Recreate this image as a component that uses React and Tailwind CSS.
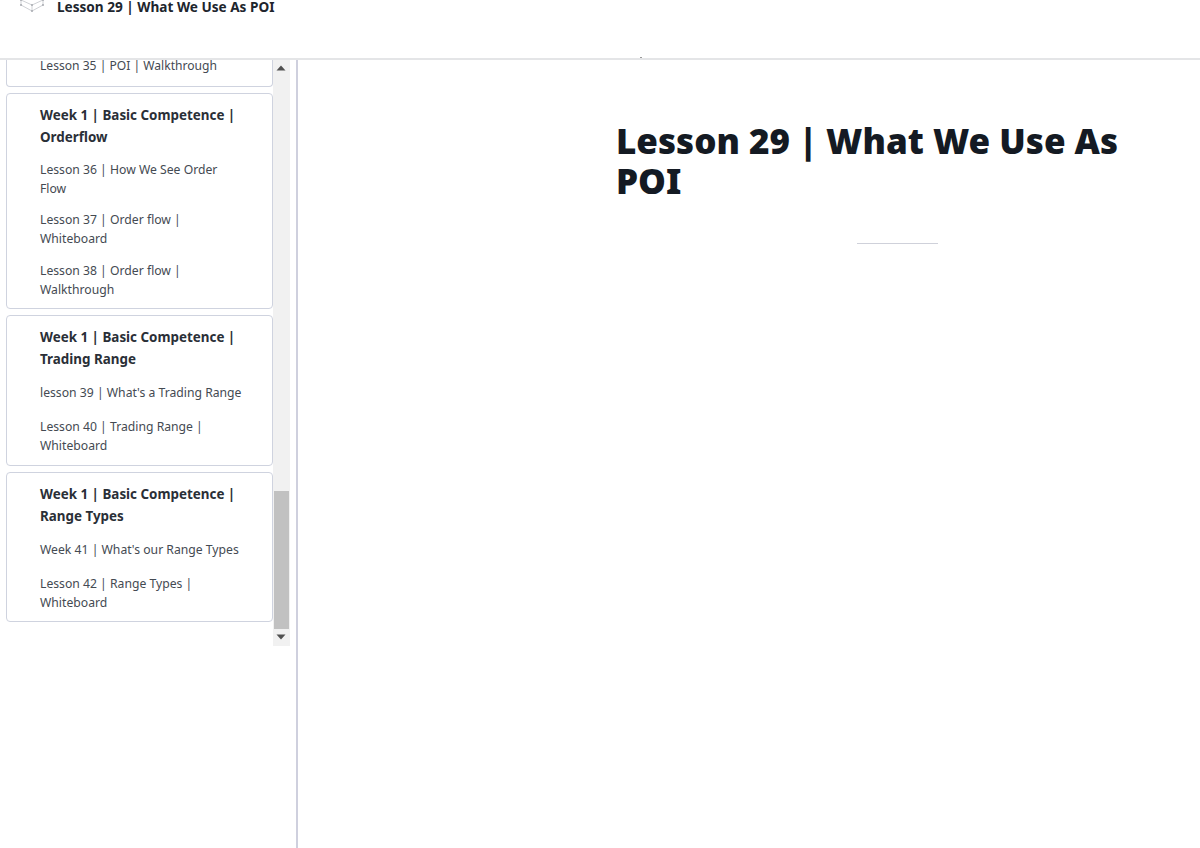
const font = { fontFamily: '"Noto Sans", "Open Sans", sans-serif' };

const groups = [
  { lessons: [["Lesson 35 | POI | Walkthrough"]], clipped: true },
  {
    title: ["Week 1 | Basic Competence |", "Orderflow"],
    lessons: [["Lesson 36 | How We See Order", "Flow"], ["Lesson 37 | Order flow |", "Whiteboard"], ["Lesson 38 | Order flow |", "Walkthrough"]],
    h: "h-[216px]",
  },
  {
    title: ["Week 1 | Basic Competence |", "Trading Range"],
    lessons: [["lesson 39 | What's a Trading Range"], ["Lesson 40 | Trading Range |", "Whiteboard"]],
    h: "h-[151px]",
  },
  {
    title: ["Week 1 | Basic Competence |", "Range Types"],
    lessons: [["Week 41 | What's our Range Types"], ["Lesson 42 | Range Types |", "Whiteboard"]],
    h: "h-[150px]",
  },
];

function Card({ g }) {
  if (g.clipped) {
    return (
      <div className="h-[27px] shrink-0 rounded-b border border-t-0 border-[#cfd3df] pl-[33px] text-[12.1px] leading-[19px] text-[#444a52]">
        <div className="-mt-[4px] whitespace-nowrap">{g.lessons[0][0]}</div>
      </div>
    );
  }
  return (
    <div className={`${g.h} shrink-0 rounded border border-[#cfd3df] pl-[33px] pt-[9.5px]`}>
      <div className="text-[13.4px] leading-[22px] font-bold text-[#2a2f37]">
        {g.title.map((t) => <div key={t} className="whitespace-nowrap">{t}</div>)}
      </div>
      <div className="mt-[12px] flex flex-col gap-[11.5px] text-[12.2px] leading-[19px] text-[#444a52]">
        {g.lessons.map((l) => (
          <div key={l[0]} className={l.length === 1 ? "pt-[1.5px] pb-[3.5px]" : "pb-px"}>
            {l.map((t) => <div key={t} className="whitespace-nowrap">{t}</div>)}
          </div>
        ))}
      </div>
    </div>
  );
}

function Scrollbar() {
  return (
    <div className="w-[17px] h-[586px] bg-[#f1f1f1] flex flex-col items-center">
      <div className="h-[15px] pr-[2px] flex items-center justify-center shrink-0">
        <svg width="10" height="6" viewBox="0 0 10 6"><path d="M5 0.5 L9.5 5.5 H0.5 Z" fill="#505050" /></svg>
      </div>
      <div className="h-[416px] shrink-0" />
      <div className="w-[15px] h-[138px] bg-[#c1c1c1] shrink-0" />
      <div className="h-[15px] pr-[2px] flex items-center justify-center shrink-0">
        <svg width="10" height="6" viewBox="0 0 10 6"><path d="M5 5.5 L9.5 0.5 H0.5 Z" fill="#505050" /></svg>
      </div>
    </div>
  );
}

export default function App() {
  return (
    <div style={font} className="h-[848px] w-[1200px] overflow-hidden bg-white flex flex-col">
      <header className="relative h-[60px] shrink-0 border-b-2 border-[#e4e5e7] flex items-start pl-[20px]">
        <svg className="-mt-[6px] shrink-0" width="24" height="18" viewBox="0 0 24 18" fill="none" stroke="#cfd1d5" strokeWidth="1">
          <path d="M12 1 L23 6 L23 11 L12 17 L1 11 L1 6 Z" />
          <path d="M1 6 L12 11 L23 6" />
          <path d="M12 11 L12 17" />
          <g fill="#a9abb0" stroke="none">
            <circle cx="12" cy="17" r="1" />
            <circle cx="1" cy="11" r="1" />
            <circle cx="23" cy="11" r="1" />
            <circle cx="1" cy="6" r="1" />
            <circle cx="23" cy="6" r="1" />
            <circle cx="12" cy="11" r="1" />
          </g>
        </svg>
        <div className="ml-[13px] text-[13.6px] leading-[13px] font-bold text-[#20252d] whitespace-nowrap">Lesson 29 | What We Use As POI</div>
        <div className="absolute left-[640px] top-[57px] w-[2px] h-px bg-[#9a9a9a]" />
      </header>
      <div className="flex flex-1 min-h-0">
        <aside className="w-[298px] shrink-0 border-r-2 border-[#cfd0de] flex items-start pl-[6px]">
          <div className="w-[267px] flex flex-col gap-[6px]">
            {groups.map((g, i) => <Card key={i} g={g} />)}
          </div>
          <Scrollbar />
        </aside>
        <main className="flex-1 pl-[318px] pr-[21px] pt-[61px]">
          <h1 className="text-[35px] leading-[40px] font-black text-[#141a23]">Lesson 29 | What We Use As POI</h1>
          <div className="mx-auto mt-[42px] w-[81px] h-px bg-[#cfd1da]" />
        </main>
      </div>
    </div>
  );
}
